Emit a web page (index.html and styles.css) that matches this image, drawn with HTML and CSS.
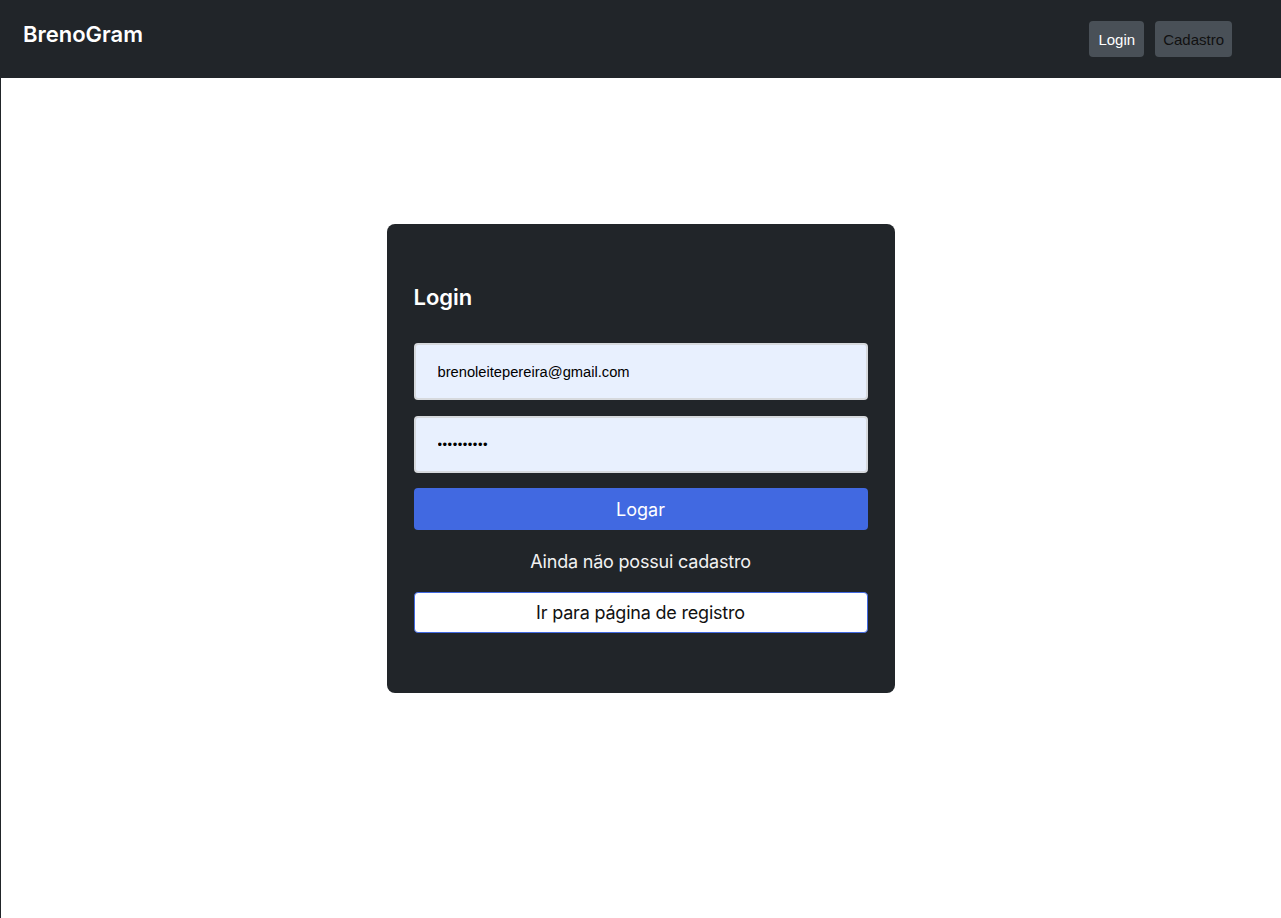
FILE: index.html
```html
<!DOCTYPE html>
<html lang="pt-BR">
<head>
<meta charset="utf-8">
<title>BrenoGram</title>
<link rel="stylesheet" href="styles.css">
</head>
<body>
<header class="navbar">
  <span class="brand">BrenoGram</span>
  <nav class="nav-links">
    <a class="nav-btn nav-btn-light" href="#">Login</a>
    <a class="nav-btn nav-btn-dark" href="#">Cadastro</a>
  </nav>
</header>
<main class="page">
  <form class="card">
    <h2 class="card-title">Login</h2>
    <input class="field" type="email" value="brenoleitepereira@gmail.com">
    <input class="field" type="password" value="1234567890">
    <button class="btn-primary" type="button">Logar</button>
    <p class="hint">Ainda não possui cadastro</p>
    <button class="btn-outline" type="button">Ir para página de registro</button>
  </form>
</main>
</body>
</html>
```
FILE: styles.css
```css
html, body {
  margin: 0;
  padding: 0;
}
body {
  background: #212529;
  font-family: Inter, "Noto Sans", sans-serif;
  min-height: 918px;
}
.navbar {
  height: 78px;
  background: #212529;
  display: flex;
  align-items: flex-start;
  justify-content: space-between;
  padding: 0 49px 0 23px;
  box-sizing: border-box;
}
.brand {
  color: #ffffff;
  font-weight: 600;
  font-size: 22px;
  line-height: 26px;
  margin-top: 21px;
}
.nav-links {
  display: flex;
  gap: 11px;
  margin-top: 21px;
}
.nav-btn {
  display: flex;
  align-items: center;
  height: 36px;
  padding: 0 9px;
  border-radius: 4px;
  background: #495057;
  font-family: "Liberation Sans", Arial, sans-serif;
  font-size: 15px;
  text-decoration: none;
}
.nav-btn-light { color: #ffffff; }
.nav-btn-dark { color: #111111; padding: 0 8px; }
.page {
  margin-left: 1px;
  background: #ffffff;
  height: 840px;
  display: flex;
  justify-content: center;
  align-items: flex-start;
  padding-top: 146px;
  box-sizing: border-box;
}
.card {
  width: 508px;
  box-sizing: border-box;
  background: #212529;
  border-radius: 8px;
  padding: 58px 27px 60px;
  display: flex;
  flex-direction: column;
  margin-right: 1px;
}
.card-title {
  margin: 0 0 31px;
  color: #ffffff;
  font-size: 22px;
  font-weight: 600;
  line-height: 30px;
}
.field {
  height: 57px;
  box-sizing: border-box;
  border: 2px solid #d6d9dd;
  border-radius: 4px;
  background: #e8f0fe;
  padding: 0 22px;
  font-family: "Liberation Sans", Arial, sans-serif;
  font-size: 14.7px;
  color: #000000;
  margin: 0 0 16px;
  outline: none;
}
.field[type="password"] {
  margin-bottom: 15px;
  font-size: 13px;
  letter-spacing: 0.5px;
}
.btn-primary {
  height: 42px;
  border: none;
  border-radius: 4px;
  background: #4169e1;
  color: #ffffff;
  font-family: Inter, "Noto Sans", sans-serif;
  font-size: 18px;
}
.hint {
  margin: 0;
  height: 62px;
  display: flex;
  align-items: center;
  justify-content: center;
  color: #f2f2f2;
  font-size: 18px;
  letter-spacing: -0.2px;
}
.btn-outline {
  height: 41px;
  border: 1px solid #4169e1;
  border-radius: 4px;
  background: #ffffff;
  color: #111111;
  font-family: Inter, "Noto Sans", sans-serif;
  font-size: 18px;
  letter-spacing: -0.2px;
}
```
